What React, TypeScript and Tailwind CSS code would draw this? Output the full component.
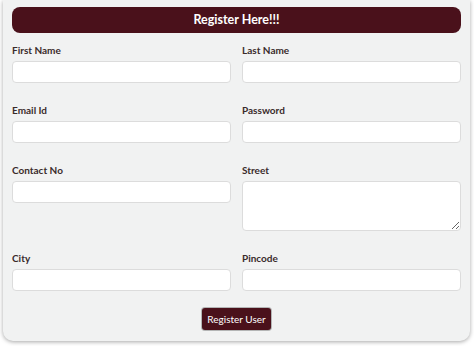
import React from "react";

const campos = [
  { label: "First Name", type: "text" },
  { label: "Last Name", type: "text" },
  { label: "Email Id", type: "email" },
  { label: "Password", type: "password" },
  { label: "Contact No", type: "text" },
  { label: "Street", type: "textarea" },
  { label: "City", type: "text" },
  { label: "Pincode", type: "text" },
];

export default function App() {
  return (
    <div className="min-h-[346px] w-[474px] bg-white font-['Lato',sans-serif]">
      {/* Card do formulário */}
      <div className="ml-[3px] w-[467px] rounded-b-[10px] bg-[#f1f2f2] px-[9px] pt-[7px] pb-[11px] shadow-[0_1px_4px_rgba(0,0,0,0.35)]">
        <div className="flex h-[26px] items-center justify-center rounded-[8px] bg-[#4a111b] text-[12.5px] font-bold text-white">
          Register Here!!!
        </div>

        <form className="mt-[11px] grid grid-cols-2 gap-x-[11px] gap-y-[21px]">
          {campos.map((c) => (
            <div key={c.label} className="flex flex-col">
              <label className="mb-[4px] block h-[13px] text-[10px] font-bold leading-[12px] text-[#3a2b2b]">
                {c.label}
              </label>
              {c.type === "textarea" ? (
                <textarea className="block h-[50px] w-full resize-y rounded-[4px] border border-[#dcdcdc] bg-white outline-none" />
              ) : (
                <input
                  type={c.type}
                  className="block h-[22px] w-full rounded-[4px] border border-[#dcdcdc] bg-white outline-none"
                />
              )}
            </div>
          ))}
        </form>

        <div className="mt-[17px] flex justify-center">
          <button className="h-[22px] w-[69px] rounded-[3px] bg-[#4a111b] text-[10px] text-white shadow-[0_0_0_1px_rgba(0,0,0,0.25)]">
            Register User
          </button>
        </div>
      </div>
    </div>
  );
}
